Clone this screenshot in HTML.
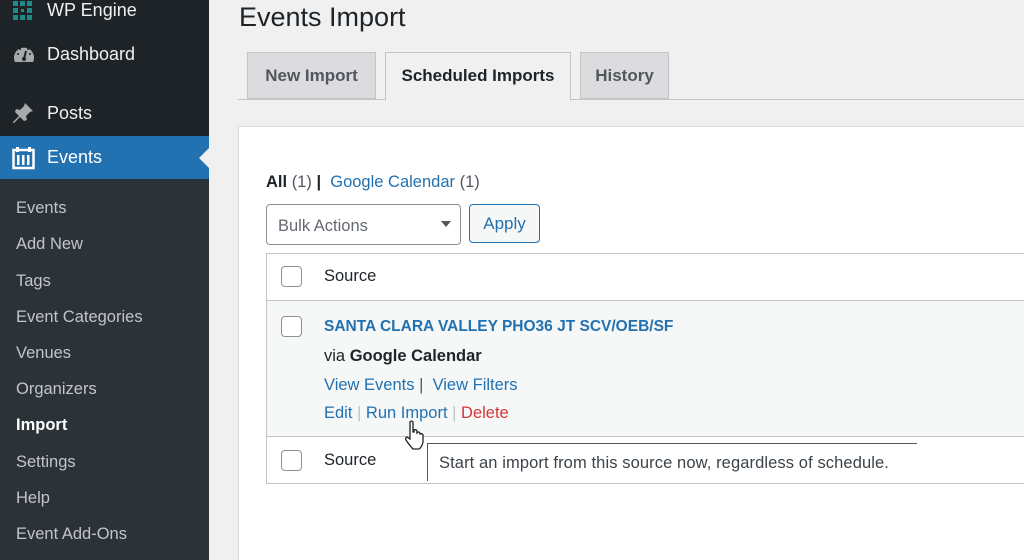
<!DOCTYPE html>
<html><head><style>
*{margin:0;padding:0;box-sizing:border-box}
html,body{width:1024px;height:560px;overflow:hidden}
body{background:#f0f0f1;font-family:"Liberation Sans",sans-serif;position:relative;color:#1d2327}
.abs{position:absolute}
#sb{left:0;top:0;width:209px;height:560px;background:#1d2327}
#sub{left:0;top:179px;width:209px;height:381px;background:#2c3338}
.mi{position:absolute;left:47px;color:#f0f0f1;font-size:18px}
.si{position:absolute;left:16px;color:#c3c4c7;font-size:16.5px}
.tab{position:absolute;top:52px;height:47px;border:1px solid #c3c4c7;background:#dcdcde;color:#50575e;font-size:17px;font-weight:bold;line-height:46px;text-align:center}
a{color:#2271b1;text-decoration:none}
.cb{position:absolute;width:21px;height:21px;border:1px solid #8c8f94;border-radius:4px;background:#fff}
.t{position:absolute;font-size:16.5px;white-space:nowrap}
</style></head><body>
<div id="sb" class="abs"></div>
<div id="sub" class="abs"></div>
<svg class="abs" style="left:12px;top:0" width="22" height="22"><g fill="#1f8a8a"><rect x="1" y="1" width="5" height="5"/><rect x="8" y="1" width="5" height="5"/><rect x="15" y="1" width="5" height="5"/><rect x="1" y="8" width="5" height="5"/><rect x="15" y="8" width="5" height="5"/><rect x="1" y="15" width="5" height="5"/><rect x="8" y="15" width="5" height="5"/><rect x="15" y="15" width="5" height="5"/><rect x="9" y="9" width="3" height="3"/></g></svg>
<div class="mi" style="top:0">WP Engine</div>
<svg class="abs" style="left:12px;top:43px" width="24" height="20"><path d="M3 19 A10 10 0 1 1 21 19 Z" fill="#a7aaad"/><path d="M12 16 L14 8" stroke="#1d2327" stroke-width="2"/><circle cx="12" cy="16" r="2" fill="#1d2327"/><g fill="#1d2327"><circle cx="6" cy="11" r="1"/><circle cx="8" cy="6" r="1"/><circle cx="18" cy="11" r="1"/><circle cx="16" cy="6" r="1"/></g></svg>
<div class="mi" style="top:44px">Dashboard</div>
<svg class="abs" style="left:11px;top:101px" width="24" height="24"><path d="M14 2 L22 10 L19 11 L15 15 L16 19 L13 20 L9 16 L3 22 L2 22 L2 21 L8 15 L4 11 L5 8 L9 9 L13 5 Z" fill="#a7aaad"/></svg>
<div class="mi" style="top:103px">Posts</div>
<div class="abs" style="left:0;top:136px;width:209px;height:43px;background:#2271b1"></div>
<svg class="abs" style="left:12px;top:146px" width="24" height="24"><rect x="1.5" y="4" width="20" height="18" fill="none" stroke="#fff" stroke-width="2.5"/><rect x="4" y="1" width="3" height="5" fill="#fff"/><rect x="16" y="1" width="3" height="5" fill="#fff"/><g fill="#fff"><rect x="5" y="9" width="2.5" height="10"/><rect x="10" y="9" width="2.5" height="10"/><rect x="15" y="9" width="2.5" height="10"/></g></svg>
<div class="mi" style="top:147px;color:#fff">Events</div>
<div class="abs" style="left:199px;top:148px;width:0;height:0;border-top:10px solid transparent;border-bottom:10px solid transparent;border-right:10px solid #f0f0f1"></div>
<div class="si" style="top:199px">Events</div>
<div class="si" style="top:235px">Add New</div>
<div class="si" style="top:272px">Tags</div>
<div class="si" style="top:308px">Event Categories</div>
<div class="si" style="top:344px">Venues</div>
<div class="si" style="top:380px">Organizers</div>
<div class="si" style="top:416px;color:#fff;font-weight:bold">Import</div>
<div class="si" style="top:453px">Settings</div>
<div class="si" style="top:489px">Help</div>
<div class="si" style="top:525px">Event Add-Ons</div>

<div class="abs" style="left:239px;top:2px;font-size:27px;color:#1d2327">Events Import</div>
<div class="abs" style="left:238px;top:99px;width:786px;height:1px;background:#c3c4c7"></div>
<div class="tab" style="left:247px;width:129px">New Import</div>
<div class="tab" style="left:385px;width:186px;height:48px;background:#f0f0f1;color:#1d2327;border-bottom:none">Scheduled Imports</div>
<div class="tab" style="left:580px;width:89px">History</div>

<div class="abs" style="left:238px;top:126px;width:800px;height:440px;background:#fff;border:1px solid #dcdcde"></div>
<div class="t" style="left:266px;top:173px;color:#50575e"><b style="color:#1d2327">All</b> <span>(1)</span> <b style="color:#1d2327">|</b> &nbsp;<a>Google Calendar</a> (1)</div>
<div class="abs" style="left:266px;top:204px;width:195px;height:41px;border:1px solid #8c8f94;border-radius:4px;background:#fff"></div>
<div class="t" style="left:278px;top:217px;color:#646970">Bulk Actions</div>
<div class="abs" style="left:441px;top:221px;border-left:5px solid transparent;border-right:5px solid transparent;border-top:6px solid #50575e"></div>
<div class="abs" style="left:469px;top:204px;width:71px;height:39px;border:1px solid #2271b1;border-radius:4px;background:#f6f7f7;color:#2271b1;font-size:17px;text-align:center;line-height:37px">Apply</div>

<div class="abs" style="left:266px;top:253px;width:770px;height:231px;border:1px solid #c3c4c7;background:#fff"></div>
<div class="abs" style="left:267px;top:300px;width:760px;height:137px;background:#f6f7f7;border-top:1px solid #c3c4c7;border-bottom:1px solid #c3c4c7"></div>
<div class="cb" style="left:281px;top:266px"></div>
<div class="t" style="left:324px;top:267px">Source</div>
<div class="cb" style="left:281px;top:316px"></div>
<div class="t" style="left:324px;top:318px;font-weight:bold;font-size:15.5px"><a>SANTA CLARA VALLEY PHO36 JT SCV/OEB/SF</a></div>
<div class="t" style="left:324px;top:347px">via <b>Google Calendar</b></div>
<div class="t" style="left:324px;top:376px"><a>View Events</a> <span style="color:#50575e">|</span> &nbsp;<a>View Filters</a></div>
<div class="t" style="left:324px;top:404px"><a>Edit</a> <span style="color:#c3c4c7">|</span> <a>Run Import</a> <span style="color:#c3c4c7">|</span> <a style="color:#d63638">Delete</a></div>
<div class="cb" style="left:281px;top:450px"></div>
<div class="t" style="left:324px;top:451px">Source</div>

<div class="abs" style="left:427px;top:443px;width:490px;height:1px;background:#50575e"></div>
<div class="abs" style="left:427px;top:443px;width:1px;height:38px;background:#50575e"></div>
<div class="abs" style="left:428px;top:444px;width:489px;height:36px;background:#fff"></div>
<div class="t" style="left:439px;top:454px;font-size:16.5px;color:#3c434a;letter-spacing:0.1px">Start an import from this source now, regardless of schedule.</div>
<svg class="abs" style="left:402px;top:420px" width="26" height="32"><path d="M8 2 Q10 0 11 2 L11 12 L12 12 L12 10 Q14 9 15 11 L15 13 Q17 11 18 13 L18 14 Q20 13 21 15 L21 22 Q20 27 17 29 L11 29 Q8 26 4 20 Q3 18 5 17 L8 19 Z" fill="#fff" stroke="#1d2327" stroke-width="1.3"/></svg>
</body></html>
